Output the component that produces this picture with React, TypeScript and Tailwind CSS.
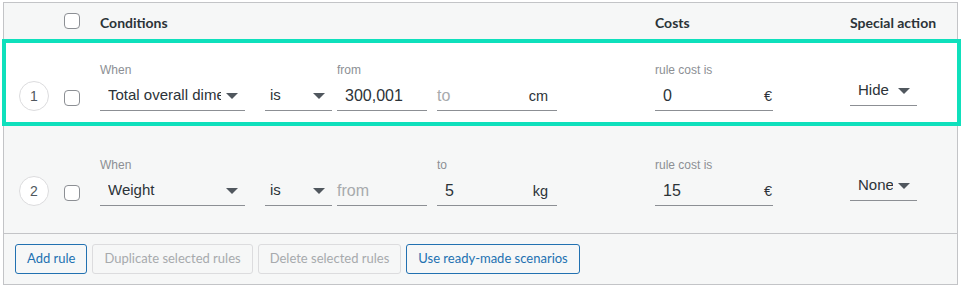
const sans = "font-['Liberation_Sans',Arial,sans-serif]";
const ui = "font-['Lato','Open_Sans',sans-serif]";

const Arrow = () => (
  <svg width="12" height="6" viewBox="0 0 12 6" className="shrink-0">
    <path d="M0 0 L12 0 L6 6 Z" fill="#50575e" />
  </svg>
);

const Checkbox = ({ className = '' }: { className?: string }) => (
  <span
    className={`block w-4 h-4 shrink-0 rounded-[4px] border-[1.5px] border-[#8c8f94] bg-white ${className}`}
  />
);

const Label = ({ text }: { text?: string }) => (
  <div className={`h-4 leading-4 text-[12px] text-[#8c8f94] mb-[3px] ${sans}`}>
    {text}
  </div>
);

const Select = ({
  label,
  value,
  width,
  pad,
}: {
  label?: string;
  value: string;
  width: string;
  pad: string;
}) => (
  <div className={`flex flex-col shrink-0 ${width}`}>
    <Label text={label} />
    <div
      className={`h-[30px] flex items-center border-b border-[#8c8f94] pr-[7px] ${pad} text-[15px] text-[#2c3338] ${sans}`}
    >
      <span className="flex-1 mr-[5px] whitespace-nowrap overflow-hidden">{value}</span>
      <Arrow />
    </div>
  </div>
);

const Input = ({
  label,
  value,
  placeholder,
  unit,
  width,
  unitPad = 'pr-[9px]',
}: {
  label?: string;
  value?: string;
  placeholder?: string;
  unit?: string;
  width: string;
  unitPad?: string;
}) => (
  <div className={`flex flex-col shrink-0 ${width}`}>
    <Label text={label} />
    <div
      className={`h-[30px] flex items-center justify-between border-b border-[#8c8f94] ${unitPad} ${sans}`}
    >
      {value ? (
        <span className="pl-2 text-[16px] text-[#2c3338]">{value}</span>
      ) : (
        <span className="text-[16px] text-[#a7aaad]">{placeholder}</span>
      )}
      {unit && (
        <span className="text-[14.5px] text-[#2c3338] mt-[3px]">{unit}</span>
      )}
    </div>
  </div>
);

type Rule = {
  n: number;
  when: string;
  from?: string;
  to?: string;
  fromLabel?: string;
  toLabel?: string;
  unit: string;
  cost: string;
  action: string;
};

const RuleRow = ({ rule }: { rule: Rule }) => (
  <div className="flex items-start">
    <div className="flex flex-col shrink-0">
      <Label />
      <div className="h-[30px] flex items-center">
        <span
          className={`w-[30px] h-[30px] rounded-full border border-[#dcdcde] bg-white flex items-center justify-center text-[14px] text-[#50575e] ${sans}`}
        >
          {rule.n}
        </span>
      </div>
    </div>
    <div className="flex flex-col shrink-0 ml-[15px]">
      <Label />
      <div className="h-[30px] flex items-center pt-[3px]">
        <Checkbox />
      </div>
    </div>
    <div className="ml-5">
      <Select label="When" value={rule.when} width="w-[145px]" pad="pl-2" />
    </div>
    <div className="ml-5">
      <Select value="is" width="w-[67px]" pad="pl-[5px]" />
    </div>
    <div className="ml-[5px]">
      <Input
        label={rule.fromLabel}
        value={rule.from}
        placeholder="from"
        width="w-[90px]"
      />
    </div>
    <div className="ml-[10px]">
      <Input
        label={rule.toLabel}
        value={rule.to}
        placeholder="to"
        unit={rule.unit}
        width="w-[120px]"
      />
    </div>
    <div className="ml-[98px]">
      <Input
        label="rule cost is"
        value={rule.cost}
        unit="€"
        width="w-[118px]"
        unitPad="pr-[1px]"
      />
    </div>
    <div className="ml-[77px] -mt-[5px]">
      <Select value={rule.action} width="w-[67px]" pad="pl-2" />
    </div>
  </div>
);

const rules: Rule[] = [
  {
    n: 1,
    when: 'Total overall dimensions',
    from: '300,001',
    fromLabel: 'from',
    unit: 'cm',
    cost: '0',
    action: 'Hide',
  },
  {
    n: 2,
    when: 'Weight',
    to: '5',
    toLabel: 'to',
    unit: 'kg',
    cost: '15',
    action: 'None',
  },
];

const Button = ({
  children,
  disabled,
}: {
  children: React.ReactNode;
  disabled?: boolean;
}) => (
  <button
    className={`h-[30px] px-[11px] rounded-[3px] border text-[13px] whitespace-nowrap ${ui} ${
      disabled
        ? 'border-[#dcdcde] text-[#a7aaad] bg-[#f6f7f7]'
        : 'border-[#2271b1] text-[#2271b1] bg-[#f6f7f7]'
    }`}
  >
    {children}
  </button>
);

export default function App() {
  return (
    <div className="w-[962px] h-[289px] bg-white pt-[2px] pl-[3px]">
      <div className="w-[955px] h-[283px] border border-[#c3c4c7] bg-[#f6f7f7] flex flex-col">
        <div
          className={`h-[36px] flex items-center pt-[3px] pl-[60px] text-[14px] font-bold text-[#2c3338] ${ui}`}
        >
          <Checkbox className="-mt-[3px]" />
          <span className="ml-5 w-[555px]">Conditions</span>
          <span className="w-[195px]">Costs</span>
          <span>Special action</span>
        </div>
        <div className="-ml-[2px] -mr-[4px] h-[87px] border-4 border-[#0fe0bc] bg-white pl-[13px] pt-[19px]">
          <RuleRow rule={rules[0]} />
        </div>
        <div className="h-[107px] pl-[15px] pt-[31px]">
          <RuleRow rule={rules[1]} />
        </div>
        <div className="flex-1 border-t border-[#c3c4c7] pl-[11px] pt-[10px] flex gap-[5px]">
          <Button>Add rule</Button>
          <Button disabled>Duplicate selected rules</Button>
          <Button disabled>Delete selected rules</Button>
          <Button>Use ready-made scenarios</Button>
        </div>
      </div>
    </div>
  );
}
